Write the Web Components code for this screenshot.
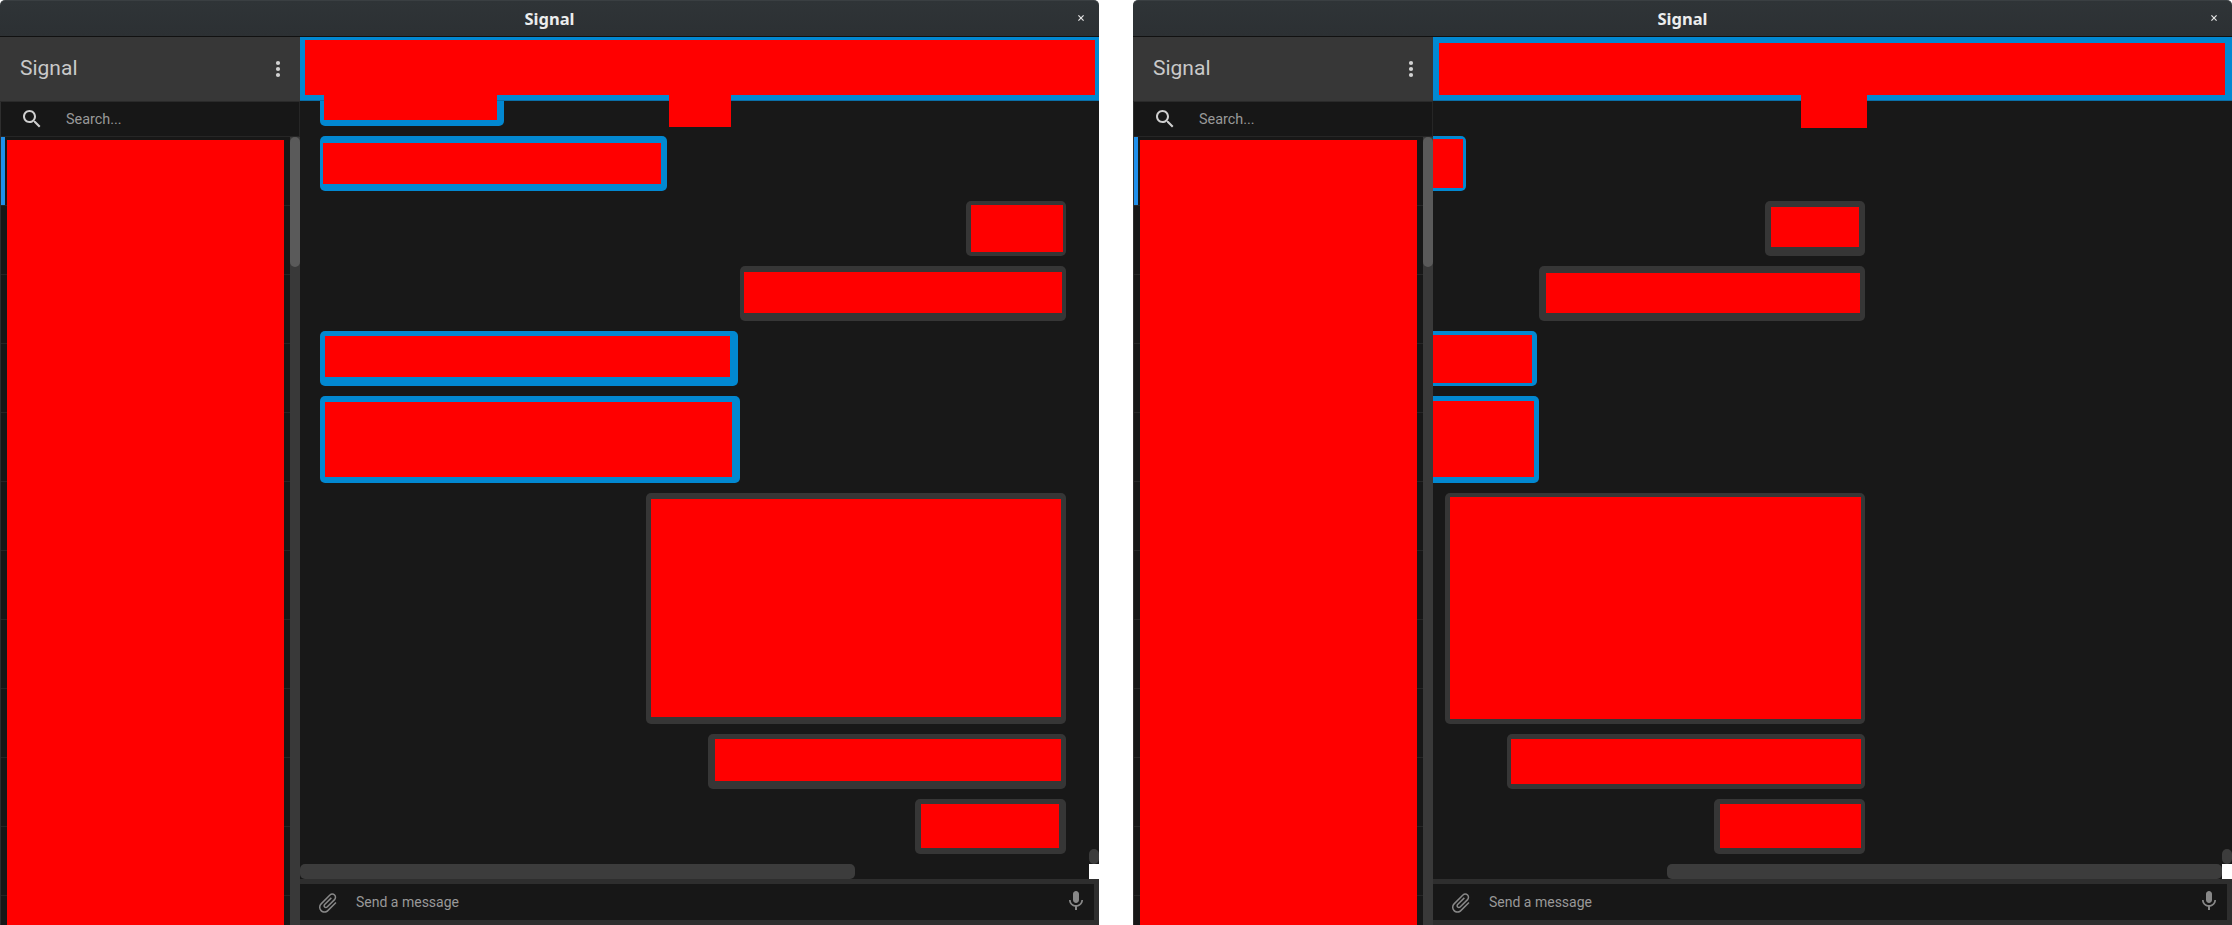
<!DOCTYPE html>
<html>
<head>
<meta charset="utf-8">
<title>Signal</title>
<style>
  html, body { margin: 0; height: 100%; overflow: hidden; background: #fff; font-family: Roboto, sans-serif; }
  body { display: flex; gap: 34px; }
</style>
</head>
<body>

<signal-window>
  <red-patch slot="patches" style="--x:24px;--w:173px;--h:25px"></red-patch>
  <red-patch slot="patches" style="--x:369px;--w:62px;--h:32px"></red-patch>
  <chat-bubble kind="in" style="--w:184px;--h:55px;--pad:6px 7px 6px 4px"></chat-bubble>
  <chat-bubble kind="in" style="--w:347px;--h:55px;--pad:7px 6px 7px 3px"></chat-bubble>
  <chat-bubble kind="out" style="--w:100px;--h:55px;--pad:4px 3px 4px 5px"></chat-bubble>
  <chat-bubble kind="out" style="--w:326px;--h:55px;--pad:6px 4px 8px 4px"></chat-bubble>
  <chat-bubble kind="in" style="--w:418px;--h:55px;--pad:5px 8px 9px 5px"></chat-bubble>
  <chat-bubble kind="in" style="--w:420px;--h:87px;--pad:6px 8px 6px 5px"></chat-bubble>
  <chat-bubble kind="out" style="--w:420px;--h:231px;--pad:6px 5px 7px 5px"></chat-bubble>
  <chat-bubble kind="out" style="--w:358px;--h:55px;--pad:5px 5px 8px 7px"></chat-bubble>
  <chat-bubble kind="out" style="--w:151px;--h:55px;--pad:5px 7px 6px 6px"></chat-bubble>
</signal-window>

<signal-window scrolled>
  <red-patch slot="patches" style="--x:368px;--w:66px;--h:33px"></red-patch>
  <chat-bubble kind="in" style="--w:184px;--h:55px;--pad:6px 7px 6px 4px"></chat-bubble>
  <chat-bubble kind="in" style="--w:347px;--h:55px;--pad:3px 3px 3px 3px"></chat-bubble>
  <chat-bubble kind="out" style="--w:100px;--h:55px;--pad:6px 6px 9px 6px"></chat-bubble>
  <chat-bubble kind="out" style="--w:326px;--h:55px;--pad:7px 5px 8px 7px"></chat-bubble>
  <chat-bubble kind="in" style="--w:418px;--h:55px;--pad:4px 5px 3px 3px"></chat-bubble>
  <chat-bubble kind="in" style="--w:420px;--h:87px;--pad:5px 5px 6px 3px"></chat-bubble>
  <chat-bubble kind="out" style="--w:420px;--h:231px;--pad:4px 4px 5px 5px"></chat-bubble>
  <chat-bubble kind="out" style="--w:358px;--h:55px;--pad:5px 4px 5px 4px"></chat-bubble>
  <chat-bubble kind="out" style="--w:151px;--h:55px;--pad:5px 4px 6px 6px"></chat-bubble>
</signal-window>

<script>
// small helper so each element only has to state its markup
function shadow(el, html) {
  el.attachShadow({ mode: 'open' });
  el.shadowRoot.innerHTML = html;
}

class TitleBar extends HTMLElement {
  connectedCallback() {
    shadow(this, `
      <style>
        :host {
          display: grid;
          grid-template-columns: 1fr auto 1fr;
          align-items: center;
          height: 36px;
          flex: none;
          box-sizing: border-box;
          border-top: 1px solid #3a3f42;
          border-bottom: 0;
          border-radius: 5px 5px 0 0;
          background: linear-gradient(#2f3437, #2c3033);
          color: #eceded;
        }
        .title {
          grid-column: 2;
          font: 700 16.5px "Noto Sans", sans-serif;
          padding-bottom: 1px;
        }
        svg { justify-self: end; margin-right: 15px; margin-bottom: 2px; }
      </style>
      <span class="title">Signal</span>
      <svg width="6" height="6" viewBox="0 0 6 6" stroke="#e6e6e6" stroke-width="1.2">
        <path d="M0.4 0.4 5.6 5.6M5.6 0.4 0.4 5.6"/>
      </svg>`);
  }
}

class ConversationList extends HTMLElement {
  connectedCallback() {
    let rows = '';
    for (let i = 0; i < 12; i++) {
      rows += `<div class="row${i === 0 ? ' selected' : ''}"></div>`;
    }
    shadow(this, `
      <style>
        :host {
          display: flex;
          flex: 1;
          min-height: 0;
          position: relative;
          overflow: hidden;
          background: #171717;
        }
        .rows { flex: 1; min-width: 0; }
        .row {
          height: 68px;
          border-bottom: 1px solid #262626;
          position: relative;
        }
        .selected::before {
          content: '';
          position: absolute;
          left: 0; top: 0; bottom: 0;
          width: 4px;
          background: #2090ea;
        }
        .bar { width: 10px; background: #393939; flex: none; }
        .thumb { height: 130px; background: #5a5a5a; border-radius: 5px; }
        /* redaction lying over the rows */
        .redact {
          position: absolute;
          left: 6px; top: 3px; bottom: 0;
          width: 277px;
          background: #f00;
        }
      </style>
      <div class="rows">${rows}</div>
      <div class="bar"><div class="thumb"></div></div>
      <div class="redact"></div>`);
  }
}

class SideBar extends HTMLElement {
  connectedCallback() {
    shadow(this, `
      <style>
        :host {
          display: flex;
          flex-direction: column;
          width: 300px;
          flex: none;
          box-sizing: border-box;
          border-left: 1px solid #2e2e2e;
          background: #171717;
        }
        header {
          display: flex;
          align-items: center;
          justify-content: space-between;
          height: 64px;
          flex: none;
          margin-left: -1px;
          padding: 0 10px 0 20px;
          background: #373737;
          border-bottom: 1px solid #2a2a2a;
          color: #c9c9c9;
          font: 400 21px Roboto, sans-serif;
        }
        header span { padding-bottom: 2px; }
        .search {
          display: flex;
          align-items: center;
          gap: 22px;
          height: 34px;
          flex: none;
          padding-left: 19px;
          border-right: 1px solid #262626;
          border-bottom: 1px solid #262626;
          color: #999;
          font: 400 14.4px Roboto, sans-serif;
        }
        svg { display: block; flex: none; }
      </style>
      <header>
        <span>Signal</span>
        <svg width="24" height="24" viewBox="0 0 24 24" fill="#d2d2d2">
          <circle cx="12" cy="6" r="2.1"/><circle cx="12" cy="12" r="2.1"/><circle cx="12" cy="18" r="2.1"/>
        </svg>
      </header>
      <div class="search">
        <svg width="24" height="24" viewBox="0 0 24 24" fill="#cfcfcf">
          <path d="M15.5 14h-.79l-.28-.27C15.41 12.59 16 11.11 16 9.5 16 5.91 13.09 3 9.5 3S3 5.91 3 9.5 5.91 16 9.5 16c1.61 0 3.09-.59 4.23-1.57l.27.28v.79l5 4.99L20.49 19l-4.99-5zm-6 0C7.01 14 5 11.99 5 9.5S7.01 5 9.5 5 14 7.01 14 9.5 11.99 14 9.5 14z"/>
        </svg>
        <span>Search...</span>
      </div>
      <conversation-list></conversation-list>`);
  }
}

class TopBar extends HTMLElement {
  connectedCallback() {
    shadow(this, `
      <style>
        :host {
          display: flex;
          height: 64px;
          flex: none;
          box-sizing: border-box;
          position: relative;
          z-index: 2;
          background: #0288d1;
          border-bottom: 1px solid #0a6fa8;
          padding: var(--top-pad);
        }
        .redact { flex: 1; background: #f00; }
      </style>
      <div class="redact"></div>
      <slot></slot>`);
  }
}

class RedPatch extends HTMLElement {
  connectedCallback() {
    shadow(this, `
      <style>
        /* part of the redaction that hangs below the header */
        :host {
          display: block;
          position: absolute;
          left: var(--x);
          top: 58px;
          width: var(--w);
          height: var(--h);
          background: #f00;
        }
      </style>`);
  }
}

class ChatBubble extends HTMLElement {
  connectedCallback() {
    shadow(this, `
      <style>
        :host {
          display: flex;
          flex: none;
          box-sizing: border-box;
          width: var(--w);
          height: var(--h);
          padding: var(--pad);
          border-radius: 5px;
          background: #363636;
        }
        :host([kind="in"]) { background: #0288d1; }
        :host([kind="out"]) { align-self: flex-end; }
        .redact { flex: 1; background: #f00; }
      </style>
      <div class="redact"></div>`);
  }
}

class MessagePane extends HTMLElement {
  connectedCallback() {
    shadow(this, `
      <style>
        :host {
          display: flex;
          flex-direction: column;
          flex: 1;
          min-height: 0;
          background: #181818;
        }
        .view { flex: 1; min-height: 0; position: relative; overflow: hidden; }
        .list {
          display: flex;
          flex-direction: column;
          gap: 10px;
          width: 746px;
          padding-left: 20px;
          margin: -30px 0 0 var(--scroll-x);
        }
        .v-thumb {
          position: absolute;
          right: 0; bottom: 0;
          width: 10px; height: 15px;
          border-radius: 5px;
          background: #3c3c3c;
        }
        .h-bar { display: flex; height: 15px; flex: none; }
        .track { flex: 1; }
        .h-thumb {
          height: 100%;
          width: 555px;
          margin-left: var(--thumb-x);
          border-radius: 5px;
          background: #3c3c3c;
        }
        .corner { width: 10px; background: #fff; }
      </style>
      <div class="view">
        <div class="list"><slot></slot></div>
        <div class="v-thumb"></div>
      </div>
      <div class="h-bar">
        <div class="track"><div class="h-thumb"></div></div>
        <div class="corner"></div>
      </div>`);
  }
}

class ComposerBar extends HTMLElement {
  connectedCallback() {
    shadow(this, `
      <style>
        :host {
          display: flex;
          align-items: center;
          gap: 16px;
          height: 46px;
          flex: none;
          box-sizing: border-box;
          padding: 0 6px 0 16px;
          background: #171717;
          border: solid #2e2e2e;
          border-width: 5px 5px 5px 0;
          color: #999;
          font: 400 14px Roboto, sans-serif;
        }
        span { flex: 1; }
        svg { display: block; flex: none; fill: #888; }
        .clip { transform: translateY(1px) rotate(45deg); }
        .mic { transform: translateY(-1px); }
      </style>
      <svg class="clip" width="24" height="24" viewBox="0 0 24 24">
        <path d="M16.5 6v11.5c0 2.21-1.79 4-4 4s-4-1.79-4-4V5c0-1.38 1.12-2.5 2.5-2.5s2.5 1.12 2.5 2.5v10.5c0 .55-.45 1-1 1s-1-.45-1-1V6H10v9.5c0 1.38 1.12 2.5 2.5 2.5s2.5-1.12 2.5-2.5V5c0-2.21-1.79-4-4-4S7 2.79 7 5v12.5c0 3.04 2.46 5.5 5.5 5.5s5.5-2.46 5.5-5.5V6h-1.5z"/>
      </svg>
      <span>Send a message</span>
      <svg class="mic" width="24" height="24" viewBox="0 0 24 24">
        <path d="M12 14c1.66 0 2.99-1.34 2.99-3L15 5c0-1.66-1.34-3-3-3S9 3.34 9 5v6c0 1.66 1.34 3 3 3zm5.3-3c0 3-2.54 5.1-5.3 5.1S6.7 14 6.7 11H5c0 3.41 2.72 6.23 6 6.72V21h2v-3.28c3.28-.48 6-3.3 6-6.72h-1.7z"/>
      </svg>`);
  }
}

class SignalWindow extends HTMLElement {
  connectedCallback() {
    shadow(this, `
      <style>
        :host {
          display: flex;
          flex-direction: column;
          width: 1099px;
          height: 925px;
          flex: none;
          overflow: hidden;
          --scroll-x: 0px;
          --thumb-x: 0px;
          --top-pad: 3px 4px 5px 5px;
        }
        :host([scrolled]) {
          --scroll-x: -334px;
          --thumb-x: 234px;
          --top-pad: 6px 7px 5px 6px;
        }
        .line { height: 1px; flex: none; background: #111; }
        .body { display: flex; flex: 1; min-height: 0; }
        main { display: flex; flex-direction: column; flex: 1; min-width: 0; }
      </style>
      <title-bar></title-bar>
      <div class="line"></div>
      <div class="body">
        <side-bar></side-bar>
        <main>
          <top-bar><slot name="patches"></slot></top-bar>
          <message-pane><slot></slot></message-pane>
          <composer-bar></composer-bar>
        </main>
      </div>`);
  }
}

customElements.define('title-bar', TitleBar);
customElements.define('conversation-list', ConversationList);
customElements.define('side-bar', SideBar);
customElements.define('top-bar', TopBar);
customElements.define('red-patch', RedPatch);
customElements.define('chat-bubble', ChatBubble);
customElements.define('message-pane', MessagePane);
customElements.define('composer-bar', ComposerBar);
customElements.define('signal-window', SignalWindow);
</script>
</body>
</html>
